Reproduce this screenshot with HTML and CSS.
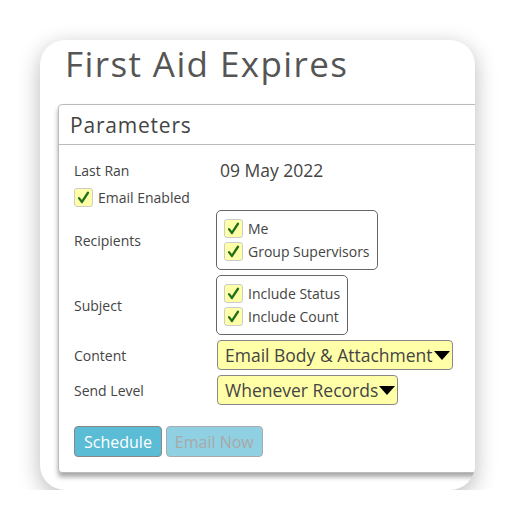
FILE: index.html
```html
<!DOCTYPE html>
<html>
<head>
<meta charset="utf-8">
<link rel="stylesheet" href="styles.css">
</head>
<body>
<div class="card">
  <h1 class="title">First Aid Expires</h1>
  <div class="panel">
    <div class="panel-head">Parameters</div>
    <div class="panel-body">
      <div class="row r-last">
        <div class="label">Last Ran</div>
        <div class="value date">09 May 2022</div>
      </div>
      <div class="row r-enabled">
        <label class="check"><span class="box"><svg viewBox="0 0 19 19"><path d="M4.5 10.2 L7.8 14.5 L14.5 4.2" /></svg></span>Email Enabled</label>
      </div>
      <div class="row r-group">
        <div class="label">Recipients</div>
        <div class="group">
          <label class="check"><span class="box"><svg viewBox="0 0 19 19"><path d="M4.5 10.2 L7.8 14.5 L14.5 4.2" /></svg></span>Me</label>
          <label class="check"><span class="box"><svg viewBox="0 0 19 19"><path d="M4.5 10.2 L7.8 14.5 L14.5 4.2" /></svg></span>Group Supervisors</label>
        </div>
      </div>
      <div class="row r-group">
        <div class="label">Subject</div>
        <div class="group">
          <label class="check"><span class="box"><svg viewBox="0 0 19 19"><path d="M4.5 10.2 L7.8 14.5 L14.5 4.2" /></svg></span>Include Status</label>
          <label class="check"><span class="box"><svg viewBox="0 0 19 19"><path d="M4.5 10.2 L7.8 14.5 L14.5 4.2" /></svg></span>Include Count</label>
        </div>
      </div>
      <div class="row r-select">
        <div class="label">Content</div>
        <div class="select"><span>Email Body &amp; Attachment</span><span class="arrow"></span></div>
      </div>
      <div class="row r-select">
        <div class="label">Send Level</div>
        <div class="select"><span>Whenever Records</span><span class="arrow"></span></div>
      </div>
      <div class="buttons">
        <button class="btn primary">Schedule</button>
        <button class="btn disabled">Email Now</button>
      </div>
    </div>
  </div>
</div>
</body>
</html>
```
FILE: styles.css
```css
html, body {
  margin: 0;
  padding: 0;
  background: #ffffff;
}
body {
  font-family: "Open Sans", "Liberation Sans", sans-serif;
  color: #444;
}
.card {
  margin: 40px 0 0 40px;
  width: 435px;
  height: 450px;
  background: #fff;
  border-radius: 25px;
  box-shadow: 0 6px 22px rgba(0,0,0,0.28);
  overflow: hidden;
}
.title {
  margin: 0;
  padding-left: 25px;
  height: 48px;
  font-size: 35px;
  line-height: 48px;
  font-weight: 400;
  color: #555;
  letter-spacing: 1.4px;
}
.panel {
  margin: 16px 0 0 18px;
  width: 440px;
  border: 1px solid #bbb;
  border-radius: 4px 0 0 4px;
  background: #fff;
  box-shadow: 0 4px 5px rgba(0,0,0,0.35);
}
.panel-head {
  height: 39px;
  border-bottom: 1px solid #bbb;
  padding-left: 11px;
  font-size: 21px;
  line-height: 40px;
  color: #444;
  letter-spacing: 0.8px;
}
.panel-body {
  padding: 12px 15px 15px 15px;
}
.row {
  display: flex;
  align-items: center;
}
.label {
  width: 142px;
  flex: none;
  font-size: 14px;
  color: #444;
}
.r-last { height: 26px; }
.date {
  padding-left: 4px;
  font-size: 17.5px;
  color: #444;
}
.r-enabled { margin-top: 4px; height: 21px; }
.r-group { margin-top: 2px; }
.r-group + .r-group { margin-top: 5px; }
.group {
  border: 1px solid #666;
  border-radius: 5px;
  padding: 8px 7px 8px 7px;
  display: flex;
  flex-direction: column;
  gap: 4px;
}
.check {
  display: flex;
  align-items: center;
  gap: 5px;
  font-size: 14px;
  color: #444;
  height: 19px;
}
.box {
  width: 17px;
  height: 17px;
  border: 1px solid #ccc;
  border-radius: 3px;
  background: #ffffa8;
  display: flex;
}
.box svg {
  width: 17px;
  height: 17px;
}
.box path {
  fill: none;
  stroke: #23701a;
  stroke-width: 2.6;
  stroke-linecap: round;
  stroke-linejoin: round;
}
.r-select { margin-top: 5px; }
.select {
  margin-left: 1px;
  height: 28px;
  border: 1px solid #888;
  border-radius: 4px;
  background: #ffffa8;
  display: flex;
  align-items: center;
  padding: 0 2px 0 7px;
  font-size: 17.5px;
  color: #444;
}
.arrow {
  width: 0;
  height: 0;
  margin-left: 1px;
  border-left: 8px solid transparent;
  border-right: 8px solid transparent;
  border-top: 9px solid #000;
}
.buttons {
  margin-top: 21px;
  display: flex;
  gap: 4px;
}
.btn {
  height: 31px;
  padding: 0 9px;
  border: 1px solid #888;
  border-radius: 4px;
  font-family: "Open Sans", "Liberation Sans", sans-serif;
  font-size: 16px;
}
.primary {
  background: #5bbcd6;
  color: #fff;
}
.disabled {
  padding: 0 8px;
  background: #8fd0e2;
  color: #a9a9a9;
  border-color: #aaa;
}
```
